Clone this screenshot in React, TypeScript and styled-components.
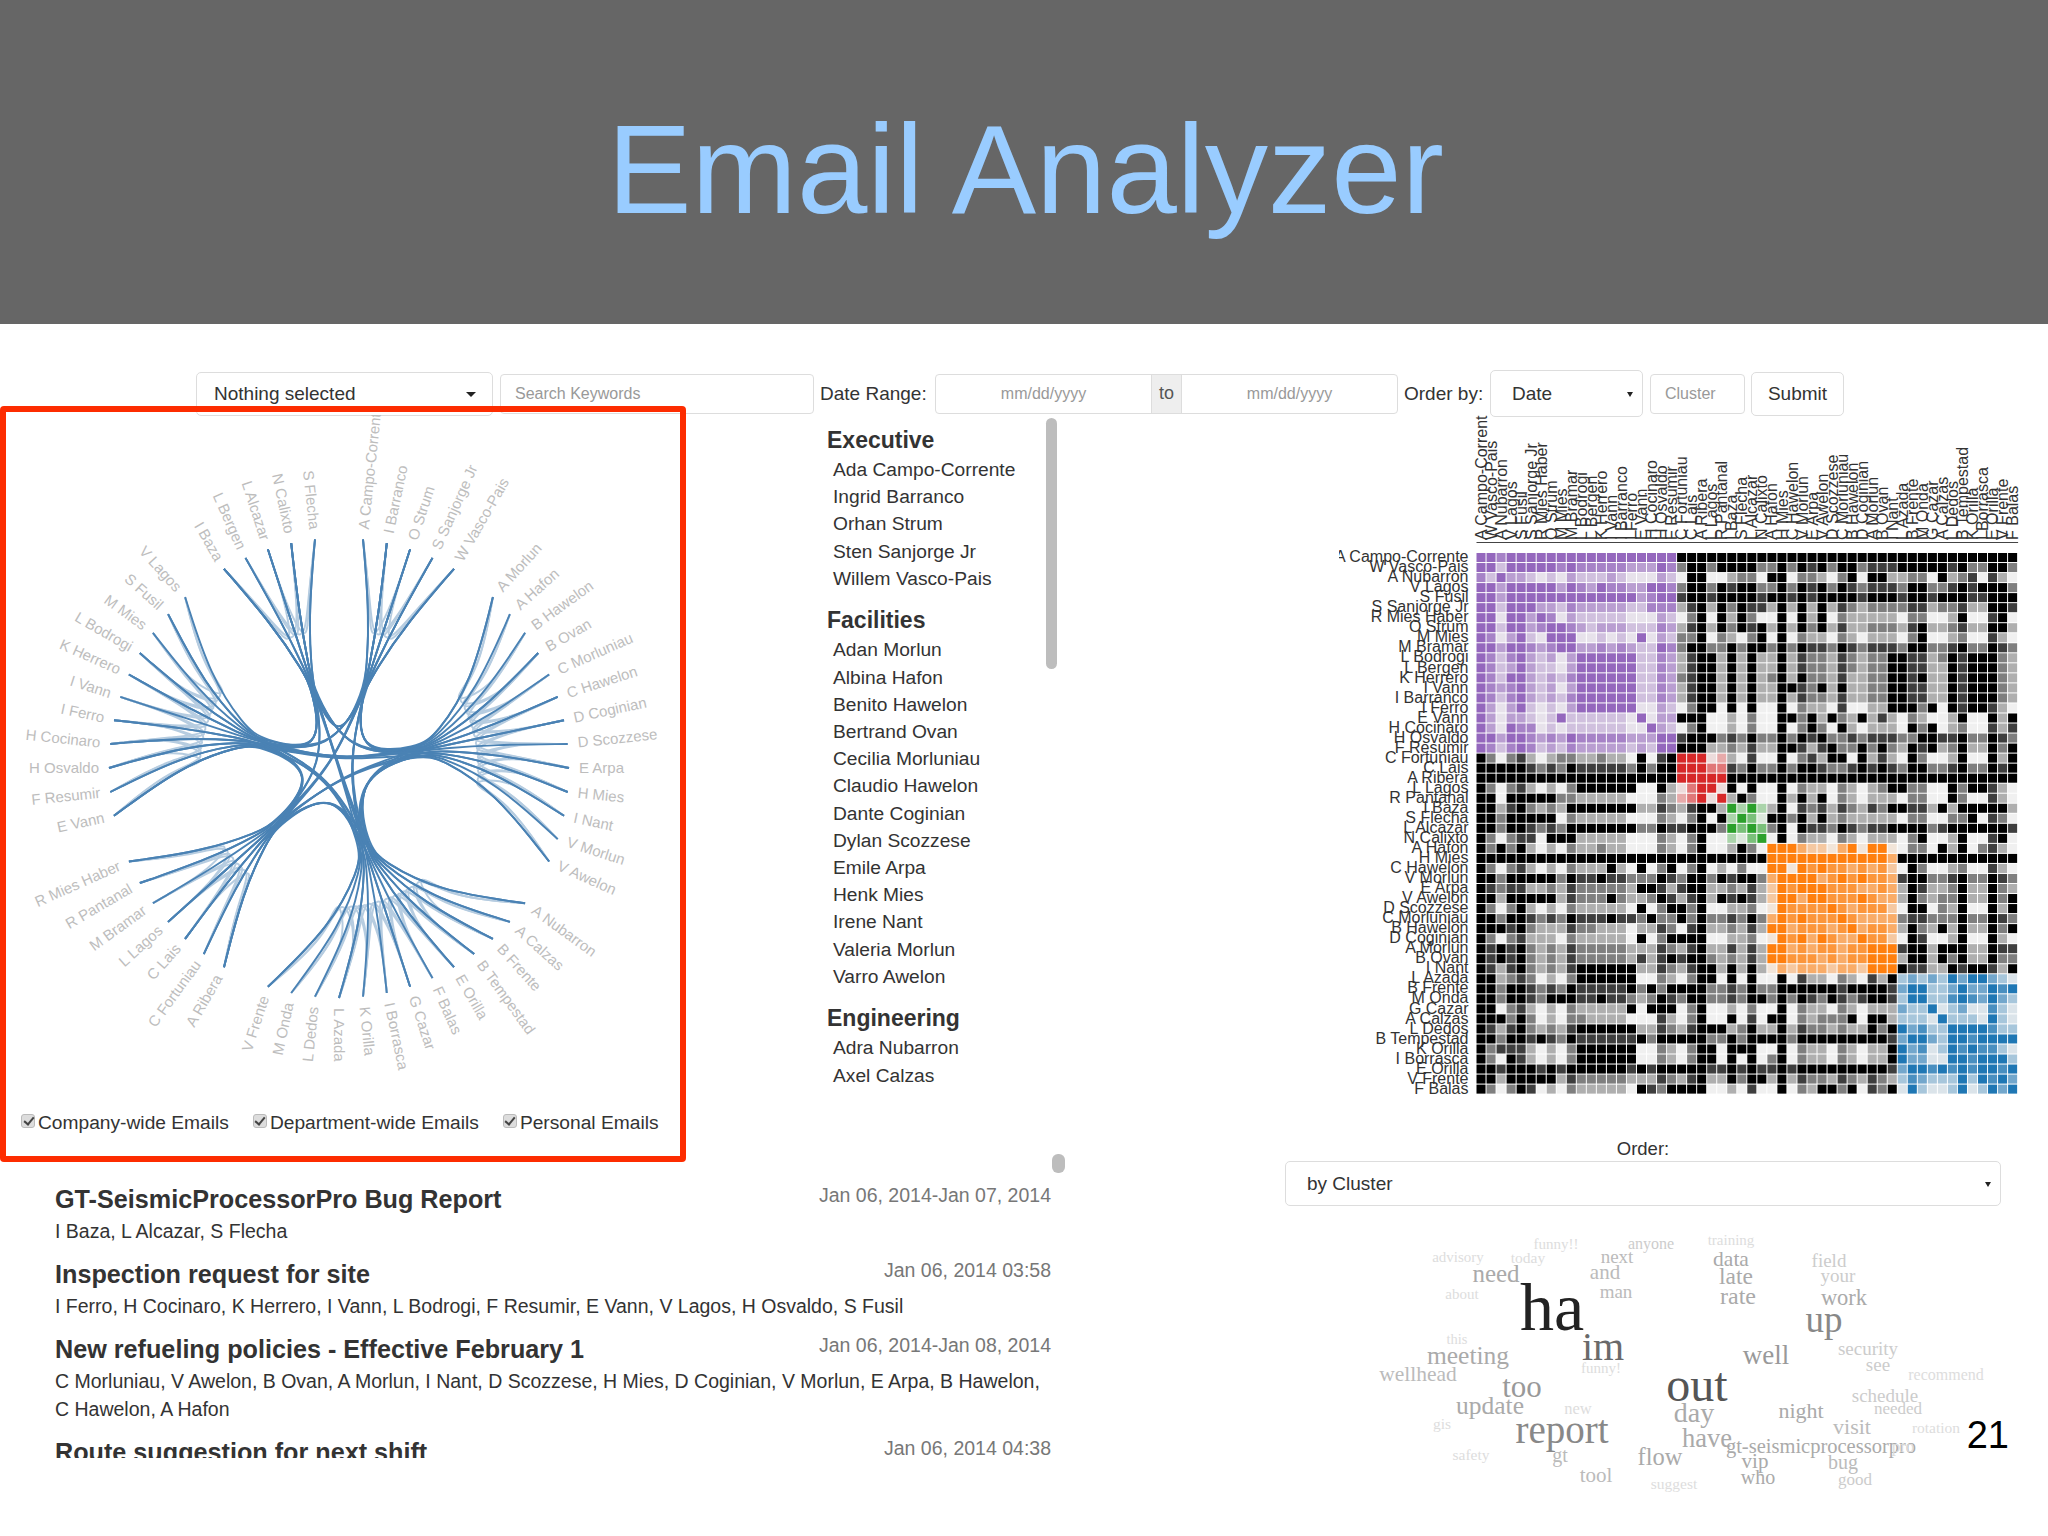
import React from 'react'
import styled, { createGlobalStyle } from 'styled-components'

const GlobalStyle = createGlobalStyle`
  html, body {
    margin: 0;
    padding: 0;
    background: #fff;
  }

  * {
    box-sizing: border-box;
  }

  body {
    font-family: "Liberation Sans", Arial, sans-serif;
    color: #333;
  }
`

type Point = [number, number]

const RADIUS = 230
const CENTER: Point = [333, 353]

const radialGroups: { start: number; names: string[] }[] = [
  { start: 6, names: ['A Campo-Corrente', 'I Barranco', 'O Strum', 'S Sanjorge Jr', 'W Vasco-Pais'] },
  {
    start: 42,
    names: ['A Morlun', 'A Hafon', 'B Hawelon', 'B Ovan', 'C Morluniau', 'C Hawelon', 'D Coginian', 'D Scozzese', 'E Arpa', 'H Mies', 'I Nant', 'V Morlun', 'V Awelon'],
  },
  {
    start: 126,
    names: ['A Nubarron', 'A Calzas', 'B Frente', 'B Tempestad', 'E Orilla', 'F Balas', 'G Cazar', 'I Borrasca', 'K Orilla', 'L Azada', 'L Dedos', 'M Onda', 'V Frente'],
  },
  { start: 210, names: ['A Ribera', 'C Fortuniau', 'C Lais', 'L Lagos', 'M Bramar', 'R Pantanal', 'R Mies Haber'] },
  {
    start: 258,
    names: ['E Vann', 'F Resumir', 'H Osvaldo', 'H Cocinaro', 'I Ferro', 'I Vann', 'K Herrero', 'L Bodrogi', 'M Mies', 'S Fusil', 'V Lagos'],
  },
  { start: 330, names: ['I Baza', 'L Bergen', 'L Alcazar', 'N Calixto', 'S Flecha'] },
]

const polar = (deg: number, r: number): Point => {
  const a = (deg * Math.PI) / 180
  return [CENTER[0] + r * Math.sin(a), CENTER[1] - r * Math.cos(a)]
}

// open b-spline through the control points, clamped at both ends
const splinePath = (p: Point[]) => {
  const n = p.length - 1
  const s = [p[0], p[0], ...p, p[n], p[n]]
  let d = `M${p[0][0].toFixed(1)} ${p[0][1].toFixed(1)}`
  for (let i = 0; i + 3 < s.length; i++) {
    const [b, c, e] = [s[i + 1], s[i + 2], s[i + 3]]
    d += `C${((2 * b[0] + c[0]) / 3).toFixed(1)} ${((2 * b[1] + c[1]) / 3).toFixed(1)} ${((b[0] + 2 * c[0]) / 3).toFixed(1)} ${((b[1] + 2 * c[1]) / 3).toFixed(1)} ${((b[0] + 4 * c[0] + e[0]) / 6).toFixed(1)} ${((b[1] + 4 * c[1] + e[1]) / 6).toFixed(1)}`
  }
  return d
}

const groupMid = (g: number) => {
  const group = radialGroups[g]
  return group.start + ((group.names.length - 1) * 6) / 2
}

const leafDeg = (g: number, k: number) => radialGroups[g].start + k * 6
const leafAt = (g: number, k: number) => polar(leafDeg(g, k), RADIUS)
const spread = (g: number, k: number, f: number, r: number) =>
  polar(groupMid(g) + (leafDeg(g, k) - groupMid(g)) * f, r)

const strand = (g: number, k: number): Point[] => [
  leafAt(g, k),
  spread(g, k, 0.58, 158),
  spread(g, k, 0.2, 104),
  spread(g, k, 0.06, 82),
]

const crossEdges: string[] = []
const localEdges: string[] = []

radialGroups.forEach((group, g) => {
  group.names.forEach((_, k) => {
    const other = (g + 1 + (k * 2) % 5) % 6
    const t = (k * 3) % radialGroups[other].names.length
    const a = strand(g, k)
    const b = strand(other, t)
    const knee: Point = [
      CENTER[0] + ((a[3][0] + b[3][0]) / 2 - CENTER[0]) * 0.3,
      CENTER[1] + ((a[3][1] + b[3][1]) / 2 - CENTER[1]) * 0.3,
    ]
    crossEdges.push(splinePath([...a, knee, ...b.reverse()]))
    for (const step of [2, 3]) {
      if (k + step < group.names.length) {
        localEdges.push(
          splinePath([
            leafAt(g, k),
            spread(g, k, 0.62, 170),
            spread(g, k + step / 2, 0.62, 124),
            spread(g, k + step, 0.62, 170),
            leafAt(g, k + step),
          ]),
        )
      }
    }
  })
})

const matrixNames = [
  'A Campo-Corrente', 'W Vasco-Pais', 'A Nubarron', 'V Lagos', 'S Fusil', 'S Sanjorge Jr', 'R Mies Haber', 'O Strum', 'M Mies',
  'M Bramar', 'L Bodrogi', 'L Bergen', 'K Herrero', 'I Vann', 'I Barranco', 'I Ferro', 'E Vann', 'H Cocinaro', 'H Osvaldo',
  'F Resumir', 'C Fortuniau', 'C Lais', 'A Ribera', 'L Lagos', 'R Pantanal', 'I Baza', 'S Flecha', 'L Alcazar', 'N Calixto',
  'A Hafon', 'H Mies', 'C Hawelon', 'V Morlun', 'E Arpa', 'V Awelon', 'D Scozzese', 'C Morluniau', 'B Hawelon', 'D Coginian',
  'A Morlun', 'B Ovan', 'I Nant', 'L Azada', 'B Frente', 'M Onda', 'G Cazar', 'A Calzas', 'L Dedos', 'B Tempestad', 'K Orilla',
  'I Borrasca', 'E Orilla', 'V Frente', 'F Balas',
]

// lower triangle of the co-occurrence matrix, levels 0-4
const matrixRows = [
  '4',
  '44',
  '314',
  '4424',
  '44244',
  '441444',
  '4404424',
  '44144234',
  '430241044',
  '4424432344',
  '43134212024',
  '431242110244',
  '4314421213444',
  '43234212024444',
  '431342121344444',
  '4202410102444444',
  '42022101411111104',
  '420433010111111004',
  '4424432324333332224',
  '43134312132222212144',
  '420231012211211040344',
  '4444432324333332424444',
  '44444444444444444444444',
  '420231010244444400410244',
  '4404444422111110002112404',
  '44134212144444441132134414',
  '442444440211111000210240414',
  '4424432324444444224334442424',
  '42023304441111100021024001024',
  '424241010211211000210240014204',
  '4444444444444444444444444444444',
  '42023101021114 1040240240 1020044',
  '4424444424 33433 222 43 2442 434422444',
  '4323311213 22222 144 31 3441 1213114344',
  '4414444413 22242 112 43 1341 43431144244',
  '4202410102 11111 040 24 4240 011200433334',
  '4424432324 33343 324 22 4242 2324224343334',
  '4443421113 22111 011 32 0341 12131442333234',
  '4202311102 11111 040 24 4440 011200434243224',
  '4343421213 22222 111 32 1341 1313144232332334',
  '4343421213 22222 131 34 3442 12131443332323344',
  '4313421213 44444 411 32 1344 141410212221221444',
  '4412320102 44444 400 21 0244 040400403110210314 1',
  '4424432324 33333 424 24 4442 232422444444344443 24',
  '4424432444 33433 212 43 2442 232442424324323443 144',
  '4402310102 11111 404 44 0240 010200402110210111 2114',
  '4442420102 21111 000 31 0240 040304402122240441 11104',
  '4313421213 44444 411 32 1344 412411413221211424 423114',
  '4424434324 33333 342 44 4442 242444424444444443 2442144',
  '4233310102 44444 400 21 0244 044400402110210114 42301434',
  '4204310102 44444 400 21 0244 040402402110210114 422004434',
  '4434443434 44444 343 44 4443 343433434444444443 2443434344',
  '4414444413 22222 111 32 1341 142441413221321321 13211141434',
  '4202430102 11111 043 24 4440 010300402144240324 041001401424',
].map((row) => row.replace(/ /g, ''))

const clusters: { end: number; color: number[] }[] = [
  { end: 20, color: [148, 103, 189] },
  { end: 25, color: [214, 39, 40] },
  { end: 29, color: [44, 160, 44] },
  { end: 42, color: [255, 127, 14] },
  { end: 54, color: [31, 119, 180] },
]

const clusterOf = (i: number) => clusters.findIndex((c) => i < c.end)

const cellFill = (r: number, c: number) => {
  const hi = Math.max(r, c)
  const lo = Math.min(r, c)
  const level = Number(matrixRows[hi]?.[lo] ?? 0)
  const same = clusterOf(r) === clusterOf(c)
  const rgb = same ? clusters[clusterOf(r)].color : [0, 0, 0]
  const alpha = same ? [0.1, 0.35, 0.6, 0.8, 1][level] : [0, 0.27, 0.47, 0.74, 1][level]
  const mix = rgb.map((v) => Math.round(v * alpha + 240 * (1 - alpha)))
  return `rgb(${mix.join(',')})`
}

const MATRIX_LEFT = 137.5
const MATRIX_TOP = 138
const CELL = 10.03

const cloudWords: [string, number, number, number, string][] = [
  ['funny!!', 1556, 1248, 15, '#ddd'],
  ['anyone', 1651, 1248, 16, '#ccc'],
  ['training', 1731, 1244, 15, '#ddd'],
  ['advisory', 1458, 1261, 15, '#ddd'],
  ['today', 1528, 1262, 15.5, '#ddd'],
  ['next', 1617, 1262, 19, '#bbb'],
  ['data', 1731, 1265, 21.5, '#aaa'],
  ['field', 1829, 1266, 19, '#ccc'],
  ['need', 1496, 1281, 25, '#aaa'],
  ['and', 1605, 1278, 21, '#bbb'],
  ['late', 1736, 1283, 23.5, '#aaa'],
  ['your', 1838, 1281, 19, '#ccc'],
  ['about', 1462, 1298, 15, '#ddd'],
  ['man', 1616, 1297, 19, '#bbb'],
  ['rate', 1738, 1303, 24, '#aaa'],
  ['work', 1844, 1304, 22.5, '#aaa'],
  ['ha', 1552, 1329, 68, '#222'],
  ['up', 1824, 1331, 37, '#888'],
  ['this', 1457, 1343, 14.5, '#ddd'],
  ['im', 1603, 1359, 40, '#6a6a6a'],
  ['well', 1766, 1363, 27, '#999'],
  ['security', 1868, 1354, 19, '#ccc'],
  ['meeting', 1468, 1363, 25.5, '#aaa'],
  ['see', 1878, 1370, 19, '#ccc'],
  ['funny!', 1601, 1372, 15, '#ddd'],
  ['wellhead', 1418, 1380, 21.5, '#bbb'],
  ['recommend', 1946, 1379, 16, '#ddd'],
  ['too', 1522, 1396, 31, '#999'],
  ['out', 1697, 1400, 48, '#555'],
  ['schedule', 1885, 1401, 19, '#ccc'],
  ['update', 1490, 1413, 25.5, '#aaa'],
  ['new', 1578, 1413, 16.5, '#ddd'],
  ['needed', 1898, 1413, 17, '#ccc'],
  ['day', 1694, 1421, 28, '#aaa'],
  ['night', 1801, 1417, 22, '#aaa'],
  ['gis', 1442, 1428, 15.5, '#ddd'],
  ['report', 1562, 1442, 39, '#888'],
  ['visit', 1852, 1433, 22, '#bbb'],
  ['rotation', 1936, 1432, 15.5, '#ddd'],
  ['have', 1707, 1446, 26.5, '#aaa'],
  ['gt-seismicprocessorpro', 1821, 1452, 20.5, '#aaa'],
  ['pro', 1903, 1451, 17, '#ddd'],
  ['gt', 1560, 1461, 20, '#bbb'],
  ['safety', 1471, 1459, 15.5, '#ddd'],
  ['flow', 1660, 1464, 24.5, '#aaa'],
  ['vip', 1755, 1467, 21, '#aaa'],
  ['bug', 1843, 1468, 20, '#bbb'],
  ['tool', 1596, 1481, 21, '#bbb'],
  ['who', 1758, 1483, 20, '#aaa'],
  ['good', 1855, 1484, 17, '#ccc'],
  ['suggest', 1674, 1488, 15.5, '#ddd'],
]

const people = [
  { title: 'Executive', names: ['Ada Campo-Corrente', 'Ingrid Barranco', 'Orhan Strum', 'Sten Sanjorge Jr', 'Willem Vasco-Pais'] },
  {
    title: 'Facilities',
    names: ['Adan Morlun', 'Albina Hafon', 'Benito Hawelon', 'Bertrand Ovan', 'Cecilia Morluniau', 'Claudio Hawelon', 'Dante Coginian', 'Dylan Scozzese', 'Emile Arpa', 'Henk Mies', 'Irene Nant', 'Valeria Morlun', 'Varro Awelon'],
  },
  { title: 'Engineering', names: ['Adra Nubarron', 'Axel Calzas'] },
]

const emails = [
  { subject: 'GT-SeismicProcessorPro Bug Report', date: 'Jan 06, 2014-Jan 07, 2014', people: 'I Baza, L Alcazar, S Flecha' },
  {
    subject: 'Inspection request for site',
    date: 'Jan 06, 2014 03:58',
    people: 'I Ferro, H Cocinaro, K Herrero, I Vann, L Bodrogi, F Resumir, E Vann, V Lagos, H Osvaldo, S Fusil',
  },
  {
    subject: 'New refueling policies - Effective February 1',
    date: 'Jan 06, 2014-Jan 08, 2014',
    people: 'C Morluniau, V Awelon, B Ovan, A Morlun, I Nant, D Scozzese, H Mies, D Coginian, V Morlun, E Arpa, B Hawelon, C Hawelon, A Hafon',
  },
  { subject: 'Route suggestion for next shift', date: 'Jan 06, 2014 04:38', people: '' },
]

const RadialChart = () => (
  <RadialSvg viewBox="0 0 674 660">
    <g fill="none" stroke="#4a82b4" strokeWidth={1.9}>
      <g opacity={0.4}>
        {localEdges.map((d, i) => (
          <path key={i} d={d} />
        ))}
      </g>
      {crossEdges.map((d, i) => (
        <path key={i} d={d} />
      ))}
    </g>
    <g fontSize={15} fill="#bdbdbd">
      {radialGroups.flatMap((group) =>
        group.names.map((name, k) => {
          const deg = group.start + k * 6
          const [x, y] = polar(deg, RADIUS + 10)
          const flip = deg > 180
          return (
            <text
              key={name}
              x={x}
              y={y}
              dy=".31em"
              textAnchor={flip ? 'end' : 'start'}
              transform={`rotate(${flip ? deg + 90 : deg - 90} ${x} ${y})`}
            >
              {name}
            </text>
          )
        }),
      )}
    </g>
  </RadialSvg>
)

const Matrix = () => (
  <MatrixSvg viewBox="0 0 709 685">
    <g fontSize={16} fill="#333">
      {matrixNames.map((name, i) => (
        <text key={name} x={MATRIX_LEFT - 8} y={MATRIX_TOP + CELL * i + CELL / 2} dy=".26em" textAnchor="end">
          {name}
        </text>
      ))}
      {matrixNames.map((name, i) => {
        const x = MATRIX_LEFT + CELL * i + CELL / 2
        return (
          <text key={name} x={x} y={125} dy=".32em" transform={`rotate(-90 ${x} 125)`}>
            {name}
          </text>
        )
      })}
    </g>
    <line x1={MATRIX_LEFT} x2={MATRIX_LEFT + CELL * 54} y1={127.5} y2={127.5} stroke="#444" />
    {matrixNames.map((_, r) =>
      matrixNames.map((__, c) => (
        <rect
          key={`${r}-${c}`}
          x={MATRIX_LEFT + CELL * c}
          y={MATRIX_TOP + CELL * r}
          width={CELL - 1}
          height={CELL - 1}
          fill={cellFill(r, c)}
        />
      )),
    )}
  </MatrixSvg>
)

const WordCloud = () => (
  <CloudSvg viewBox="0 0 708 330">
    {cloudWords.map(([word, x, y, size, color]) => (
      <text key={word} x={x - 1340} y={y - 1205} fontSize={size} fill={color} textAnchor="middle">
        {word}
      </text>
    ))}
  </CloudSvg>
)

const App = () => (
  <Slide>
    <GlobalStyle />
    <Banner>
      <BannerTitle>Email Analyzer</BannerTitle>
    </Banner>

    <Toolbar>
      <Dropdown $width={297} $height={44} $pad={17} $caret="wide">
        Nothing selected
      </Dropdown>
      <TextInput $width={314} placeholder="Search Keywords" />
      <ToolbarLabel $width={121}>Date Range:</ToolbarLabel>
      <DateGroup>
        <DateInput placeholder="mm/dd/yyyy" />
        <DateAddon>to</DateAddon>
        <DateInput placeholder="mm/dd/yyyy" />
      </DateGroup>
      <ToolbarLabel $width={92}>Order by:</ToolbarLabel>
      <Dropdown $width={153} $height={47} $pad={21} $caret="small">
        Date
      </Dropdown>
      <TextInput $width={95} placeholder="Cluster" />
      <SubmitButton>Submit</SubmitButton>
    </Toolbar>

    <Columns>
      <LeftColumn>
        <TopRow>
          <RadialPanel>
            <RadialChart />
            <Filters>
              <FilterLabel>
                <FilterBox type="checkbox" defaultChecked />
                Company-wide Emails
              </FilterLabel>
              <FilterLabel>
                <FilterBox type="checkbox" defaultChecked />
                Department-wide Emails
              </FilterLabel>
              <FilterLabel>
                <FilterBox type="checkbox" defaultChecked />
                Personal Emails
              </FilterLabel>
            </Filters>
          </RadialPanel>

          <PeoplePanel>
            {people.map((group) => (
              <div key={group.title}>
                <PeopleHeading>{group.title}</PeopleHeading>
                {group.names.map((name) => (
                  <PersonName key={name}>{name}</PersonName>
                ))}
              </div>
            ))}
            <PeopleThumb />
          </PeoplePanel>
        </TopRow>

        <EmailList>
          {emails.map((email) => (
            <EmailItem key={email.subject}>
              <EmailHead>
                <EmailSubject>{email.subject}</EmailSubject>
                <EmailDate>{email.date}</EmailDate>
              </EmailHead>
              <EmailPeople>{email.people}</EmailPeople>
            </EmailItem>
          ))}
          <EmailThumb />
        </EmailList>
      </LeftColumn>

      <RightColumn>
        <Matrix />
        <OrderBlock>
          <OrderLabel>Order:</OrderLabel>
          <Dropdown $width={716} $height={45} $pad={21} $caret="small">
            by Cluster
          </Dropdown>
        </OrderBlock>
        <WordCloud />
      </RightColumn>
    </Columns>

    <PageNumber>21</PageNumber>
  </Slide>
)

export default App

const Slide = styled.div`
  position: relative;
  width: 2048px;
  height: 1536px;
  overflow: hidden;
  background: #fff;
`

const Banner = styled.header`
  height: 324px;
  padding: 15px 0 0 3px;
  background: #666;
  display: flex;
  align-items: center;
  justify-content: center;
`

const BannerTitle = styled.h1`
  margin: 0;
  font-size: 126.5px;
  font-weight: 400;
  line-height: 1;
  color: #99ccff;
`

const Toolbar = styled.div`
  display: flex;
  align-items: center;
  height: 47px;
  margin: 46px 0 0 196px;
`

const Dropdown = styled.div<{ $width: number; $height: number; $pad: number; $caret: 'wide' | 'small' }>`
  position: relative;
  flex: none;
  display: flex;
  align-items: center;
  width: ${(p) => p.$width}px;
  height: ${(p) => p.$height}px;
  padding-left: ${(p) => p.$pad}px;
  border: 1.5px solid #ddd;
  border-radius: 5px;
  background: #fff;
  font-size: 19px;
  color: #333;

  &::after {
    content: '';
    position: absolute;
    top: 50%;
    right: ${(p) => (p.$caret === 'wide' ? 16 : 9)}px;
    margin-top: -2px;
    border-style: solid;
    border-color: #222 transparent transparent;
    border-width: ${(p) => (p.$caret === 'wide' ? '5px 5px 0' : '5px 3px 0')};
  }
`

const TextInput = styled.input<{ $width: number }>`
  flex: none;
  width: ${(p) => p.$width}px;
  height: 40px;
  margin-left: 7px;
  padding: 0 14px;
  border: 1.5px solid #ddd;
  border-radius: 4px;
  font: 16px "Liberation Sans", Arial, sans-serif;
  outline: none;

  &::placeholder {
    color: #999;
    opacity: 1;
  }
`

const ToolbarLabel = styled.label<{ $width: number }>`
  flex: none;
  width: ${(p) => p.$width}px;
  padding-left: 6px;
  font-size: 19px;
  color: #333;
`

const DateGroup = styled.div`
  flex: none;
  display: flex;
  width: 463px;
  height: 40px;
  border: 1.5px solid #ddd;
  border-radius: 4px;
`

const DateInput = styled.input`
  flex: 1;
  min-width: 0;
  border: none;
  background: none;
  text-align: center;
  font: 16px "Liberation Sans", Arial, sans-serif;
  outline: none;

  &::placeholder {
    color: #999;
    opacity: 1;
  }
`

const DateAddon = styled.span`
  flex: none;
  width: 31px;
  display: flex;
  align-items: center;
  justify-content: center;
  background: #eee;
  border-left: 1.5px solid #ddd;
  border-right: 1.5px solid #ddd;
  font-size: 18px;
  color: #555;
`

const SubmitButton = styled.button`
  flex: none;
  width: 93px;
  height: 44px;
  margin-left: 6px;
  border: 1.5px solid #ddd;
  border-radius: 5px;
  background: #fff;
  font: 19px "Liberation Sans", Arial, sans-serif;
  color: #333;
`

const Columns = styled.div`
  display: grid;
  grid-template-columns: 1065px 983px;
  margin-top: -11px;
`

const LeftColumn = styled.div`
  display: flex;
  flex-direction: column;
`

const TopRow = styled.div`
  display: flex;
  height: 756px;
`

const RadialPanel = styled.section`
  position: relative;
  flex: none;
  width: 686px;
  height: 756px;
  padding-top: 3px;
  border: 6px solid #fd2c00;
  border-radius: 4px;
`

const RadialSvg = styled.svg`
  display: block;
  width: 674px;
  height: 660px;
`

const Filters = styled.div`
  display: flex;
  gap: 24px;
  margin-top: 37px;
  padding-left: 15px;
`

const FilterLabel = styled.label`
  display: flex;
  align-items: center;
  gap: 3px;
  font-size: 19.2px;
  color: #333;
`

const FilterBox = styled.input`
  appearance: none;
  position: relative;
  width: 14px;
  height: 14px;
  margin: -5px 0 0;
  border: 1px solid #bbb;
  border-radius: 3px;
  background: #ddd;

  &::after {
    content: '';
    position: absolute;
    left: 3.5px;
    top: 0.5px;
    width: 4px;
    height: 8px;
    border: solid #444;
    border-width: 0 2px 2px 0;
    transform: rotate(40deg);
  }
`

const PeoplePanel = styled.aside`
  position: relative;
  flex: none;
  width: 230px;
  height: 684px;
  margin-left: 141px;
  padding-top: 19px;
  overflow: hidden;
`

const PeopleHeading = styled.h4`
  margin: 13.4px 0 1px;
  font-size: 23px;
  font-weight: 700;
  line-height: 30px;
  color: #333;

  div:first-child > & {
    margin-top: 0;
  }
`

const PersonName = styled.div`
  padding-left: 6px;
  font-size: 19.2px;
  line-height: 27.2px;
  color: #333;
`

const PeopleThumb = styled.div`
  position: absolute;
  top: 12px;
  left: 219px;
  width: 11px;
  height: 251px;
  border-radius: 6px;
  background: #bdbdbd;
`

const EmailList = styled.section`
  position: relative;
  height: 304px;
  margin-top: -8px;
  padding: 28px 14px 0 55px;
  overflow: hidden;
`

const EmailItem = styled.article`
  margin-bottom: 12px;
`

const EmailHead = styled.div`
  display: flex;
  justify-content: space-between;
  align-items: flex-start;
`

const EmailSubject = styled.h3`
  margin: 0;
  font-size: 25.2px;
  font-weight: 700;
  line-height: 34px;
  color: #333;
`

const EmailDate = styled.span`
  font-size: 19.5px;
  line-height: 26px;
  color: #777;
`

const EmailPeople = styled.p`
  margin: 1px 0 0;
  font-size: 19.5px;
  line-height: 28px;
  color: #333;
`

const EmailThumb = styled.div`
  position: absolute;
  top: 0;
  right: 0;
  width: 13px;
  height: 19px;
  border-radius: 6px;
  background: #bdbdbd;
`

const RightColumn = styled.div`
  display: flex;
  flex-direction: column;
  padding-top: 9px;
`

const MatrixSvg = styled.svg`
  display: block;
  width: 709px;
  height: 685px;
  margin-left: 274px;
`

const OrderBlock = styled.div`
  display: flex;
  flex-direction: column;
  align-items: center;
  width: 716px;
  margin: 37px 0 0 220px;
`

const OrderLabel = styled.div`
  height: 24px;
  font-size: 18.5px;
  line-height: 24px;
  color: #333;
`

const CloudSvg = styled.svg`
  display: block;
  width: 708px;
  height: 330px;
  margin-left: 275px;
  font-family: "Liberation Serif", "Times New Roman", serif;
`

const PageNumber = styled.div`
  position: absolute;
  right: 39px;
  bottom: 81px;
  font-size: 38px;
  line-height: 40px;
  color: #000;
`
